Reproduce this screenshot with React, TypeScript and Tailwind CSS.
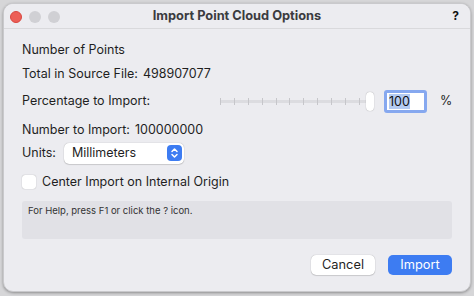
import React from "react";

export default function App() {
  const ticks = Array.from({ length: 11 });
  return (
    <div className="w-[474px] h-[296px] bg-[#d6d6d8] pt-[3px] pl-[3px] overflow-hidden" style={{ fontFamily: "Inter, 'Liberation Sans', sans-serif" }}>
      <div className="w-[468px] h-[289px] rounded-[10px] bg-[#ececf0] flex flex-col overflow-hidden shadow-[0_1px_3px_rgba(0,0,0,0.35)] border border-[#c9c9cc]">
        {/* Title bar */}
        <div className="h-[25px] flex items-center px-[6px] bg-[#ececf0] border-b border-[#d9d9dc] relative">
          <div className="flex gap-[7px] items-center mt-[1px]">
            <span className="w-[12px] h-[12px] rounded-full bg-[#ec5f57] border border-[#d8473f]" />
            <span className="w-[12px] h-[12px] rounded-full bg-[#d0d0d4]" />
            <span className="w-[12px] h-[12px] rounded-full bg-[#d0d0d4]" />
          </div>
          <div className="absolute inset-0 flex items-center justify-center text-[12.8px] font-bold text-[#3b3b3f]">Import Point Cloud Options</div>
          <div className="ml-auto mr-[5px] text-[12px] font-bold text-[#111]">?</div>
        </div>
        {/* Body */}
        <div className="flex-1 flex flex-col px-[18px] text-[12.5px] text-[#1f1f1f]">
          <div className="mt-[12px] h-[18px] flex items-center">Number of Points</div>
          <div className="mt-[6px] h-[18px] flex items-center gap-[5px]">
            <span>Total in Source File:</span>
            <span>498907077</span>
          </div>
          <div className="mt-[6px] h-[24px] flex items-center">
            <span>Percentage to Import:</span>
            <div className="ml-auto flex items-center">
              <div className="relative w-[154px] h-[20px] flex items-center">
                <div className="absolute left-0 right-[4px] h-[3px] bg-[#dcdce0] rounded" />
                <div className="absolute left-0 right-[14px] flex justify-between items-center">
                  {ticks.map((_, i) => (
                    <span key={i} className="w-[1px] h-[7px] bg-[#c6c6ca]" />
                  ))}
                </div>
                <div className="absolute right-0 w-[8px] h-[19px] rounded-[4px] bg-white shadow-[0_0_1px_rgba(0,0,0,0.4)]" />
              </div>
              <div className="ml-[10px] w-[43px] h-[23px] border-[3px] border-[#86a8ef] rounded-[3px] bg-white flex items-center px-[2px]">
                <span className="bg-[#b4cbf2] leading-[15px] text-[12.5px] text-[#111]">100</span>
              </div>
              <span className="ml-[13px] mr-[0px] w-[12px]">%</span>
            </div>
          </div>
          <div className="mt-[8px] h-[18px] flex items-center gap-[5px]">
            <span>Number to Import:</span>
            <span>100000000</span>
          </div>
          <div className="mt-[3px] h-[22px] flex items-center">
            <span>Units:</span>
            <div className="ml-[8px] w-[120px] h-[21px] bg-white rounded-[5px] shadow-[0_0_1px_rgba(0,0,0,0.35),0_1px_1px_rgba(0,0,0,0.12)] flex items-center pl-[8px] pr-[2px]">
              <span>Millimeters</span>
              <span className="ml-auto w-[15px] h-[16px] rounded-[4px] bg-[#3d7cf2] flex items-center justify-center">
                <svg width="9" height="12" viewBox="0 0 9 12" fill="none" stroke="white" strokeWidth="1.5" strokeLinecap="round" strokeLinejoin="round">
                  <path d="M2 4.5 L4.5 2 L7 4.5" />
                  <path d="M2 7.5 L4.5 10 L7 7.5" />
                </svg>
              </span>
            </div>
          </div>
          <div className="mt-[9px] h-[18px] flex items-center">
            <span className="w-[14px] h-[14px] bg-white rounded-[3px] shadow-[0_0_1px_rgba(0,0,0,0.4)]" />
            <span className="ml-[6px]">Center Import on Internal Origin</span>
          </div>
          <div className="mt-[10px] h-[38px] rounded-[3px] bg-[#e1e1e6] px-[6px] pt-[3px] text-[9.5px] text-[#333]">
            For Help, press F1 or click the ? icon.
          </div>
          <div className="mt-[16px] flex justify-end gap-[13px]">
            <button className="w-[64px] h-[20px] bg-white rounded-[5px] shadow-[0_0_1px_rgba(0,0,0,0.35),0_1px_1px_rgba(0,0,0,0.12)] text-[12.8px] text-[#1f1f1f]">Cancel</button>
            <button className="w-[64px] h-[20px] bg-[#3d7cf2] rounded-[5px] text-[12.8px] text-white">Import</button>
          </div>
        </div>
      </div>
    </div>
  );
}
